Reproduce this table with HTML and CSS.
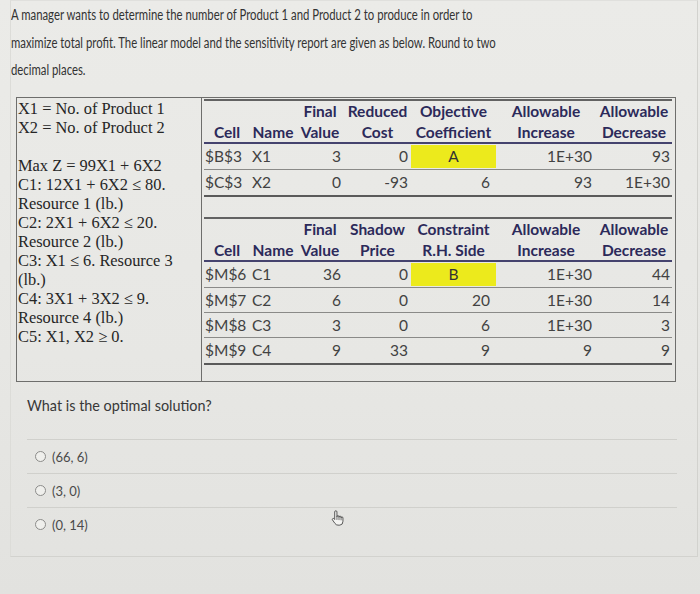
FILE: index.html
```html
<!DOCTYPE html>
<html lang="en">
<head>
<meta charset="utf-8">
<title>Linear model question</title>
<link rel="stylesheet" href="styles.css">
</head>
<body>
<div class="panel">
  <p class="stem">A manager wants to determine the number of Product 1 and Product 2 to produce in order to<br>maximize total profit. The linear model and the sensitivity report are given as below. Round to two<br>decimal places.</p>

  <div class="model">
    <div class="formulation">
      <div>X1 = No. of Product 1</div>
      <div>X2 = No. of Product 2</div>
      <div class="blank">&nbsp;</div>
      <div>Max Z = 99X1 + 6X2</div>
      <div>C1: 12X1 + 6X2 ≤ 80.</div>
      <div>Resource 1 (lb.)</div>
      <div>C2: 2X1 + 6X2 ≤ 20.</div>
      <div>Resource 2 (lb.)</div>
      <div>C3: X1 ≤ 6. Resource 3</div>
      <div>(lb.)</div>
      <div>C4: 3X1 + 3X2 ≤ 9.</div>
      <div>Resource 4 (lb.)</div>
      <div>C5: X1, X2 ≥ 0.</div>
    </div>

    <div class="reports">
      <div class="report">
        <div class="head">
          <span class="h">Cell</span>
          <span class="h">Name</span>
          <span class="h">Final<br>Value</span>
          <span class="h">Reduced<br>Cost</span>
          <span class="h">Objective<br>Coefficient</span>
          <span class="h">Allowable<br>Increase</span>
          <span class="h">Allowable<br>Decrease</span>
        </div>
        <div class="row">
          <span class="c">$B$3</span><span class="n">X1</span><span class="v">3</span><span class="v">0</span><span class="v mark">A</span><span class="v">1E+30</span><span class="v">93</span>
        </div>
        <div class="row">
          <span class="c">$C$3</span><span class="n">X2</span><span class="v">0</span><span class="v">-93</span><span class="v">6</span><span class="v">93</span><span class="v">1E+30</span>
        </div>
      </div>

      <div class="report second">
        <div class="head">
          <span class="h">Cell</span>
          <span class="h">Name</span>
          <span class="h">Final<br>Value</span>
          <span class="h">Shadow<br>Price</span>
          <span class="h">Constraint<br>R.H. Side</span>
          <span class="h">Allowable<br>Increase</span>
          <span class="h">Allowable<br>Decrease</span>
        </div>
        <div class="row tall">
          <span class="c">$M$6</span><span class="n">C1</span><span class="v">36</span><span class="v">0</span><span class="v mark">B</span><span class="v">1E+30</span><span class="v">44</span>
        </div>
        <div class="row">
          <span class="c">$M$7</span><span class="n">C2</span><span class="v">6</span><span class="v">0</span><span class="v">20</span><span class="v">1E+30</span><span class="v">14</span>
        </div>
        <div class="row">
          <span class="c">$M$8</span><span class="n">C3</span><span class="v">3</span><span class="v">0</span><span class="v">6</span><span class="v">1E+30</span><span class="v">3</span>
        </div>
        <div class="row tall">
          <span class="c">$M$9</span><span class="n">C4</span><span class="v">9</span><span class="v">33</span><span class="v">9</span><span class="v">9</span><span class="v">9</span>
        </div>
      </div>
    </div>
  </div>

  <p class="prompt">What is the optimal solution?</p>

  <ul class="choices">
    <li><span class="radio"></span>(66, 6)</li>
    <li><span class="radio"></span>(3, 0)</li>
    <li><span class="radio"></span>(0, 14)</li>
  </ul>

  <svg class="cursor" width="15" height="18" viewBox="0 0 16 18" aria-hidden="true">
    <path d="M5 10.6V2.5Q5 1.3 6.2 1.3Q7.4 1.3 7.4 2.5V7.6Q7.4 6.5 8.5 6.5Q9.6 6.5 9.6 7.7V8.1Q9.6 7 10.7 7Q11.8 7 11.8 8.2V8.7Q11.8 7.8 12.8 7.8Q13.8 7.8 13.8 9V12.5Q13.8 16.4 10.5 16.6H8.5Q6.5 16.6 5.3 14.8L2.6 11Q2.1 10.2 2.9 9.6Q3.7 9.1 4.4 9.9Z" fill="#f4f4f2" stroke="#3c3c3c" stroke-width="0.9" stroke-linejoin="round"/>
    <path d="M7.4 7.6V10.6M9.6 8.1V10.8M11.8 8.7V11" fill="none" stroke="#3c3c3c" stroke-width="0.8" stroke-linecap="round"/>
  </svg>
</div>
</body>
</html>
```

FILE: styles.css
```css
html, body {
  margin: 0;
  padding: 0;
}

body {
  width: 700px;
  height: 594px;
  overflow: hidden;
  background: linear-gradient(#ebebe8, #e7e7e4 60%, #e2e2df);
}

.panel {
  position: relative;
  margin: 0 2px 0 10px;
  height: 557px;
  box-sizing: border-box;
  border: 1px solid #d2d2ce;
  border-top-color: #e0e0dd;
  border-left-color: #dcdcd8;
}

.stem {
  margin: 0;
  padding-top: 0;
  font-family: Lato, "Liberation Sans", sans-serif;
  font-size: 15.6px;
  line-height: 27.5px;
  color: #333;
  white-space: nowrap;
  transform: scaleX(0.727);
  transform-origin: 0 0;
}

.model {
  margin: 13px 0 0 5px;
  width: 660px;
  box-sizing: border-box;
  display: grid;
  grid-template-columns: 185px 1fr;
  border: 1px solid #6e6e6c;
}

.formulation {
  border-right: 1px solid #6e6e6c;
  padding: 1px 0 0 1px;
  font-family: "Liberation Serif", "Times New Roman", serif;
  font-size: 16.4px;
  line-height: 19px;
  color: #262626;
}

.reports {
  padding: 1px 3px 16px 2px;
}

.report {
  width: 468px;
  border-top: 2px solid #626262;
  border-bottom: 2px solid #5a5a5a;
  font-family: Lato, "Liberation Sans", sans-serif;
  font-size: 15.5px;
}

.report.second {
  margin-top: 20px;
}

.head,
.row {
  display: grid;
  grid-template-columns: 46px 46px 48px 67px 85px 100px 76px;
}

.head {
  height: 43px;
  box-sizing: border-box;
  align-items: end;
  border-bottom: 2px solid #45436e;
  color: #2c2a5a;
  font-weight: 700;
  line-height: 21px;
}

.h {
  text-align: center;
  white-space: nowrap;
}

.row {
  height: 25px;
  align-items: center;
  color: #424242;
  line-height: 20px;
}

.second .row {
  height: 24px;
}

.second .row.tall {
  height: 25px;
}

.row + .row {
  border-top: 1px solid #8a8a88;
}

.c {
  padding-left: 1px;
}

.n {
  padding-left: 2px;
}

.v {
  text-align: right;
  padding-right: 3px;
}

.v:nth-child(5) {
  padding-right: 6px;
}

.v:nth-child(6) {
  padding-right: 4px;
}

.v:nth-child(7) {
  padding-right: 2px;
}

.mark {
  align-self: stretch;
  margin: 1px 0;
  background: #ecea1c;
  color: #333;
  text-align: center;
  display: flex;
  align-items: center;
  justify-content: center;
}

.v.mark {
  padding-right: 0;
}

.prompt {
  margin: 14px 0 0 16px;
  font-family: Lato, "Liberation Sans", sans-serif;
  font-size: 14.4px;
  line-height: 20px;
  color: #383838;
}

.choices {
  list-style: none;
  margin: 23px 0 0 16px;
  padding: 0;
  width: 650px;
}

.choices li {
  display: flex;
  align-items: center;
  gap: 6px;
  height: 34px;
  box-sizing: border-box;
  padding: 7px 0 6px 8px;
  border-top: 1px solid #d0d0cc;
  font-family: Lato, "Liberation Sans", sans-serif;
  font-size: 13px;
  line-height: 20px;
  color: #4a4a4a;
}

.radio {
  width: 11px;
  height: 11px;
  box-sizing: border-box;
  border: 1.3px solid #8c8c8a;
  border-radius: 50%;
  background: #efefec;
}

.cursor {
  position: absolute;
  left: 319px;
  top: 508px;
}
```
